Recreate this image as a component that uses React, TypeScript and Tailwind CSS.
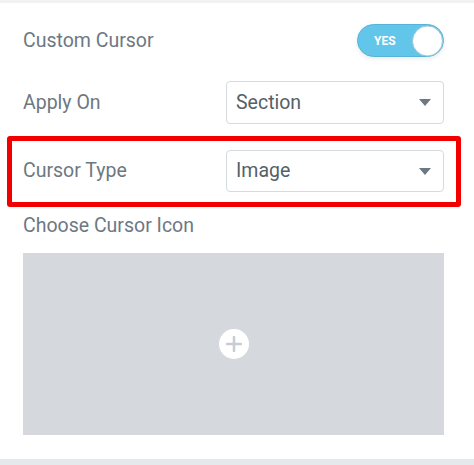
import React from 'react';

function Caret() {
  return (
    <svg width="12" height="7" viewBox="0 0 12 7" className="shrink-0">
      <path d="M0 0 H12 L6 7 Z" fill="#6d7882" />
    </svg>
  );
}

function SelectBox({ value, height }: { value: string; height: string }) {
  return (
    <div
      className={`w-[218px] ${height} flex items-center justify-between pl-[9px] pr-[12px] border border-[#d5dadf] rounded-[4px] bg-white`}
    >
      <span className="text-[19.5px] text-[#556068] leading-none">{value}</span>
      <Caret />
    </div>
  );
}

export default function App() {
  return (
    <div
      className="w-[474px] h-[465px] bg-white flex flex-col overflow-hidden"
      style={{ fontFamily: 'Roboto, "Liberation Sans", sans-serif' }}
    >
      <div className="h-[3px] bg-[#f0f2f4]" />

      <div className="pl-[23px] pr-[30px]">
        {/* Custom Cursor */}
        <div className="mt-[21px] h-[33px] flex items-center justify-between">
          <span className="text-[19.5px] text-[#6d7882]">Custom Cursor</span>
          <div className="relative w-[87px] h-[33px] rounded-full bg-[#61c6ea] border border-[#58b4d6] shadow-[0_2px_4px_rgba(0,0,0,0.08)]">
            <span className="absolute left-[16px] top-1/2 -translate-y-1/2 text-[12px] font-bold text-white leading-none">
              YES
            </span>
            <div className="absolute right-0 top-1/2 -translate-y-1/2 w-[31px] h-[31px] rounded-full bg-white border border-[#9fc8d8]" />
          </div>
        </div>

        {/* Apply On */}
        <div className="mt-[24px] h-[43px] flex items-center justify-between">
          <span className="text-[19.5px] text-[#6d7882]">Apply On</span>
          <SelectBox value="Section" height="h-[43px]" />
        </div>

        {/* Cursor Type (highlighted) */}
        <div className="mt-[12px] -ml-[16px] -mr-[17px] border-[5px] border-[#f20000] rounded-[3px] pl-[11px] pr-[12px] pt-[9px] pb-[10px]">
          <div className="h-[42px] flex items-center justify-between">
            <span className="text-[19.5px] text-[#6d7882]">Cursor Type</span>
            <SelectBox value="Image" height="h-[42px]" />
          </div>
        </div>

        {/* Choose Cursor Icon */}
        <div className="mt-[7px] h-[24px] flex items-center">
          <span className="text-[19.5px] text-[#6d7882]">Choose Cursor Icon</span>
        </div>

        <div className="mt-[15px] h-[182px] bg-[#d5d9dd] flex items-center justify-center">
          <div className="w-[30px] h-[30px] rounded-full bg-white flex items-center justify-center">
            <svg width="16" height="16" viewBox="0 0 16 16">
              <path d="M8 1 V15 M1 8 H15" stroke="#c6ccd1" strokeWidth="2.5" strokeLinecap="round" />
            </svg>
          </div>
        </div>
      </div>

      <div className="mt-auto h-[6px] bg-[#e6e9ec]" />
    </div>
  );
}
